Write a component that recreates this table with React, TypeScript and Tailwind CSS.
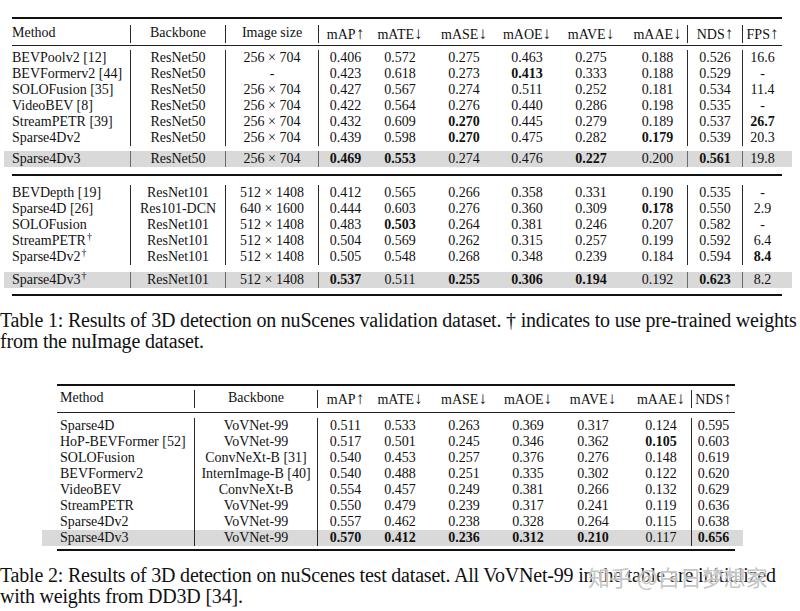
import React from 'react';

type Cell = string | { v: string; b?: boolean; sup?: boolean };

const t1Cols = 'grid grid-cols-[118px_95px_93px_54px_56px_72px_54px_74px_59px_55px_40px]';
const t2Cols = 'grid grid-cols-[137px_123px_56px_54px_74px_54px_76px_60px_44px]';

// columns that get a vertical rule on their left edge
const t1Seps = [1, 2, 3, 9, 10];
const t2Seps = [1, 2, 8];

const t1Head = ['Method', 'Backbone', 'Image size', 'mAP↑', 'mATE↓', 'mASE↓', 'mAOE↓', 'mAVE↓', 'mAAE↓', 'NDS↑', 'FPS↑'];
const t2Head = ['Method', 'Backbone', 'mAP↑', 'mATE↓', 'mASE↓', 'mAOE↓', 'mAVE↓', 'mAAE↓', 'NDS↑'];

const B = (v: string) => ({ v, b: true });
const S = (v: string) => ({ v, sup: true });

const t1GroupA: Cell[][] = [
  ['BEVPoolv2 [12]', 'ResNet50', '256 × 704', '0.406', '0.572', '0.275', '0.463', '0.275', '0.188', '0.526', '16.6'],
  ['BEVFormerv2 [44]', 'ResNet50', '-', '0.423', '0.618', '0.273', B('0.413'), '0.333', '0.188', '0.529', '-'],
  ['SOLOFusion [35]', 'ResNet50', '256 × 704', '0.427', '0.567', '0.274', '0.511', '0.252', '0.181', '0.534', '11.4'],
  ['VideoBEV [8]', 'ResNet50', '256 × 704', '0.422', '0.564', '0.276', '0.440', '0.286', '0.198', '0.535', '-'],
  ['StreamPETR [39]', 'ResNet50', '256 × 704', '0.432', '0.609', B('0.270'), '0.445', '0.279', '0.189', '0.537', B('26.7')],
  ['Sparse4Dv2', 'ResNet50', '256 × 704', '0.439', '0.598', B('0.270'), '0.475', '0.282', B('0.179'), '0.539', '20.3'],
];
const t1OursA: Cell[] = ['Sparse4Dv3', 'ResNet50', '256 × 704', B('0.469'), B('0.553'), '0.274', '0.476', B('0.227'), '0.200', B('0.561'), '19.8'];

const t1GroupB: Cell[][] = [
  ['BEVDepth [19]', 'ResNet101', '512 × 1408', '0.412', '0.565', '0.266', '0.358', '0.331', '0.190', '0.535', '-'],
  ['Sparse4D [26]', 'Res101-DCN', '640 × 1600', '0.444', '0.603', '0.276', '0.360', '0.309', B('0.178'), '0.550', '2.9'],
  ['SOLOFusion', 'ResNet101', '512 × 1408', '0.483', B('0.503'), '0.264', '0.381', '0.246', '0.207', '0.582', '-'],
  [S('StreamPETR'), 'ResNet101', '512 × 1408', '0.504', '0.569', '0.262', '0.315', '0.257', '0.199', '0.592', '6.4'],
  [S('Sparse4Dv2'), 'ResNet101', '512 × 1408', '0.505', '0.548', '0.268', '0.348', '0.239', '0.184', '0.594', B('8.4')],
];
const t1OursB: Cell[] = [S('Sparse4Dv3'), 'ResNet101', '512 × 1408', B('0.537'), '0.511', B('0.255'), B('0.306'), B('0.194'), '0.192', B('0.623'), '8.2'];

const t2Rows: Cell[][] = [
  ['Sparse4D', 'VoVNet-99', '0.511', '0.533', '0.263', '0.369', '0.317', '0.124', '0.595'],
  ['HoP-BEVFormer [52]', 'VoVNet-99', '0.517', '0.501', '0.245', '0.346', '0.362', B('0.105'), '0.603'],
  ['SOLOFusion', 'ConvNeXt-B [31]', '0.540', '0.453', '0.257', '0.376', '0.276', '0.148', '0.619'],
  ['BEVFormerv2', 'InternImage-B [40]', '0.540', '0.488', '0.251', '0.335', '0.302', '0.122', '0.620'],
  ['VideoBEV', 'ConvNeXt-B', '0.554', '0.457', '0.249', '0.381', '0.266', '0.132', '0.629'],
  ['StreamPETR', 'VoVNet-99', '0.550', '0.479', '0.239', '0.317', '0.241', '0.119', '0.636'],
  ['Sparse4Dv2', 'VoVNet-99', '0.557', '0.462', '0.238', '0.328', '0.264', '0.115', '0.638'],
];
const t2Ours: Cell[] = ['Sparse4Dv3', 'VoVNet-99', B('0.570'), B('0.412'), B('0.236'), B('0.312'), B('0.210'), '0.117', B('0.656')];

// header labels end in an arrow glyph, drawn a little larger like the paper's math arrows
const Label = ({ text }: { text: string }) => {
  const last = text.slice(-1);
  if (last !== '↑' && last !== '↓') return <>{text}</>;
  return (
    <>
      {text.slice(0, -1)}
      <span className="text-[17px] leading-none">{last}</span>
    </>
  );
};

const Row = ({ cells, cols, seps, sepColor = 'border-[#2a2a2a]', head = false, lead = '' }: { cells: Cell[]; cols: string; seps: number[]; sepColor?: string; head?: boolean; lead?: string }) => (
  <div className={`${cols} h-[16px] leading-[16px]`}>
    {cells.map((c, i) => {
      const cell = typeof c === 'string' ? { v: c } : c;
      return (
        <div
          key={i}
          className={`whitespace-nowrap ${i === 0 ? `text-left ${lead}` : 'text-center'} ${seps.includes(i) ? `border-l ${sepColor}` : ''} ${cell.b ? 'font-bold' : ''}`}
        >
          {head ? <Label text={cell.v} /> : cell.v}
          {cell.sup && <span className="text-[10px] leading-none relative top-[-5px] ml-[1px]">†</span>}
        </div>
      );
    })}
  </div>
);

export default function App() {
  return (
    <div className="relative w-[800px] h-[611px] bg-white text-[#111] overflow-hidden" style={{ fontFamily: '"Liberation Serif", "Times New Roman", serif' }}>
      <div className="pt-[17px] text-[14px]">
        {/* Table 1 */}
        <div className="ml-[12px] w-[770px]">
          <div className="h-[2px] bg-[#111]" />
          <div className="pt-[6px] pb-[4px]">
            <Row cells={t1Head} cols={t1Cols} seps={t1Seps} head />
          </div>
          <div className="h-[1px] bg-[#222]" />
          <div className="pt-[4px]">
            {t1GroupA.map((r, i) => (
              <Row key={i} cells={r} cols={t1Cols} seps={t1Seps} />
            ))}
          </div>
          <div className="mt-[5px] ml-[-8px] mr-[-10px] pl-[8px] pr-[10px] bg-[#d9d9d9]">
            <Row cells={t1OursA} cols={t1Cols} seps={t1Seps} sepColor="border-[#6b6b6b]" />
          </div>
          <div className="mt-[7px] h-[2px] bg-[#111]" />
          <div className="pt-[9px]">
            {t1GroupB.map((r, i) => (
              <Row key={i} cells={r} cols={t1Cols} seps={t1Seps} />
            ))}
          </div>
          <div className="mt-[7px] ml-[-8px] mr-[-10px] pl-[8px] pr-[10px] bg-[#d9d9d9]">
            <Row cells={t1OursB} cols={t1Cols} seps={t1Seps} sepColor="border-[#6b6b6b]" />
          </div>
          <div className="mt-[6px] h-[2px] bg-[#111]" />
        </div>

        {/* Caption 1 */}
        <div className="mt-[14px] text-[20px] leading-[21px] tracking-[-0.2px]">
          <div className="whitespace-nowrap">Table 1: Results of 3D detection on nuScenes validation dataset. † indicates to use pre-trained weights</div>
          <div className="whitespace-nowrap">from the nuImage dataset.</div>
        </div>

        {/* Table 2 */}
        <div className="mt-[32px] ml-[57px] w-[678px]">
          <div className="h-[2px] bg-[#111]" />
          <div className="pt-[4px] pb-[6px]">
            <Row cells={t2Head} cols={t2Cols} seps={t2Seps} head lead="pl-[3px]" />
          </div>
          <div className="h-[1px] bg-[#222]" />
          <div className="pt-[5px]">
            {t2Rows.map((r, i) => (
              <Row key={i} cells={r} cols={t2Cols} seps={t2Seps} lead="pl-[3px]" />
            ))}
          </div>
          <div className="ml-[-15px] mr-[-8px] pl-[15px] pr-[8px] bg-[#d9d9d9]">
            <Row cells={t2Ours} cols={t2Cols} seps={t2Seps} lead="pl-[3px]" />
          </div>
          <div className="mt-[3px] h-[2px] bg-[#111]" />
        </div>

        {/* Caption 2 */}
        <div className="mt-[14px] text-[20px] leading-[21px] tracking-[-0.2px]">
          <div className="whitespace-nowrap">Table 2: Results of 3D detection on nuScenes test dataset. All VoVNet-99 in the table are initialized</div>
          <div className="whitespace-nowrap">with weights from DD3D [34].</div>
        </div>
      </div>

      {/* watermark */}
      <div
        className="absolute left-[588px] top-[562px] text-[22px] leading-[28px] text-[#a0a0a0]/60 whitespace-nowrap [text-shadow:0_0_2px_#fff,0_0_2px_#fff]"
        style={{ fontFamily: '"Noto Sans CJK SC", "Liberation Sans", sans-serif' }}
      >
        知乎 @白日梦想家
      </div>
    </div>
  );
}
